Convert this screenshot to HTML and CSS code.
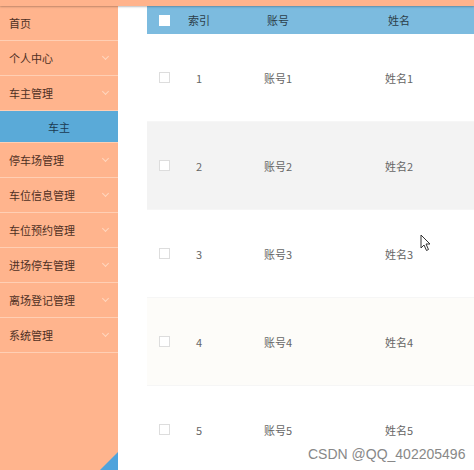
FILE: index.html
```html
<!DOCTYPE html>
<html lang="zh">
<head>
    <meta charset="UTF-8">
    <meta name="viewport" content="width=device-width, initial-scale=1.0">
    <title>车主管理</title>
    <link rel="stylesheet" href="styles.css">
</head>
<body>
    <div class="topbar"></div>
    <div class="layout">
        <div class="sidebar">
            <div class="menu-item">首页</div>
            <div class="menu-item">个人中心<span class="arrow"></span></div>
            <div class="menu-item">车主管理<span class="arrow"></span></div>
            <div class="menu-sub">车主</div>
            <div class="menu-item">停车场管理<span class="arrow"></span></div>
            <div class="menu-item">车位信息管理<span class="arrow"></span></div>
            <div class="menu-item">车位预约管理<span class="arrow"></span></div>
            <div class="menu-item">进场停车管理<span class="arrow"></span></div>
            <div class="menu-item">离场登记管理<span class="arrow"></span></div>
            <div class="menu-item">系统管理<span class="arrow"></span></div>
            <div class="corner"></div>
        </div>
        <div class="main">
            <div class="table">
                <div class="row head">
                    <div class="cell"><span class="check"></span></div>
                    <div class="cell">索引</div>
                    <div class="cell">账号</div>
                    <div class="cell">姓名</div>
                    <div class="cell"></div>
                </div>
                <div class="row">
                    <div class="cell"><span class="check"></span></div>
                    <div class="cell">1</div>
                    <div class="cell">账号1</div>
                    <div class="cell">姓名1</div>
                    <div class="cell"></div>
                </div>
                <div class="row gray">
                    <div class="cell"><span class="check"></span></div>
                    <div class="cell">2</div>
                    <div class="cell">账号2</div>
                    <div class="cell">姓名2</div>
                    <div class="cell"></div>
                </div>
                <div class="row">
                    <div class="cell"><span class="check"></span></div>
                    <div class="cell">3</div>
                    <div class="cell">账号3</div>
                    <div class="cell">姓名3</div>
                    <div class="cell"></div>
                </div>
                <div class="row cream">
                    <div class="cell"><span class="check"></span></div>
                    <div class="cell">4</div>
                    <div class="cell">账号4</div>
                    <div class="cell">姓名4</div>
                    <div class="cell"></div>
                </div>
                <div class="row">
                    <div class="cell"><span class="check"></span></div>
                    <div class="cell">5</div>
                    <div class="cell">账号5</div>
                    <div class="cell">姓名5</div>
                    <div class="cell"></div>
                </div>
            </div>
        </div>
    </div>

    <svg class="cursor" width="12" height="18" viewBox="0 0 12 18">
        <path d="M1 1 L1 14 L4 11 L6.5 16.5 L8.5 15.5 L6 10 L10 10 Z" fill="#fff" stroke="#333" stroke-width="1"/>
    </svg>
    <div class="watermark">CSDN @QQ_402205496</div>
</body>
</html>
```

FILE: styles.css
```css
body {
    margin: 0;
    font-family: "Noto Sans CJK SC", "Noto Sans", sans-serif;
    font-size: 11px;
    background-color: #fff;
    width: 474px;
    height: 470px;
    overflow: hidden;
    position: relative;
}

.topbar {
    height: 6px;
    background-color: #ffb38c;
    box-shadow: 0 1px 2px rgba(0, 0, 0, 0.25);
    position: relative;
    z-index: 2;
}

.layout {
    display: flex;
    height: 464px;
}

.sidebar {
    width: 118px;
    flex-shrink: 0;
    background-color: #ffb48d;
    position: relative;
    overflow: hidden;
}

.menu-item {
    height: 35px;
    box-sizing: border-box;
    border-bottom: 1px solid #ffcfb4;
    display: flex;
    align-items: center;
    justify-content: space-between;
    padding: 0 10px 0 9px;
    color: #4e3024;
}

.arrow {
    width: 4px;
    height: 4px;
    border-right: 1px solid #ffd6bf;
    border-bottom: 1px solid #ffd6bf;
    transform: rotate(45deg);
    margin-top: -3px;
}

.menu-sub {
    height: 32px;
    background-color: #5aaad8;
    border-bottom: 1px solid #ffcfb4;
    box-sizing: border-box;
    display: flex;
    align-items: center;
    justify-content: center;
    color: #1c3a52;
}

.corner {
    position: absolute;
    right: 0;
    bottom: 0;
    width: 0;
    height: 0;
    border-left: 18px solid transparent;
    border-bottom: 18px solid #4fa3dc;
}

.main {
    flex: 1;
    padding-left: 29px;
    overflow: hidden;
}

.table {
    width: 340px;
}

.row {
    display: grid;
    grid-template-columns: 34px 36px 122px 120px 1fr;
    height: 88px;
    box-sizing: border-box;
    border-bottom: 1px solid #f6f6f6;
    color: #666;
}

.row.head {
    height: 28px;
    background-color: #7cbbdf;
    color: #2c3e4a;
    border-bottom: none;
}

.row.gray {
    background-color: #f3f3f3;
}

.row.cream {
    background-color: #fdfcf9;
}

.cell {
    display: flex;
    align-items: center;
    justify-content: center;
}

.check {
    width: 9px;
    height: 9px;
    border: 1px solid #ddd;
    background-color: #fff;
}

.head .check {
    border-color: #fff;
}

.cursor {
    position: absolute;
    left: 420px;
    top: 234px;
}

.watermark {
    position: absolute;
    left: 308px;
    top: 446px;
    font-family: "Liberation Sans", Arial, sans-serif;
    font-size: 14px;
    color: #888;
}
```
